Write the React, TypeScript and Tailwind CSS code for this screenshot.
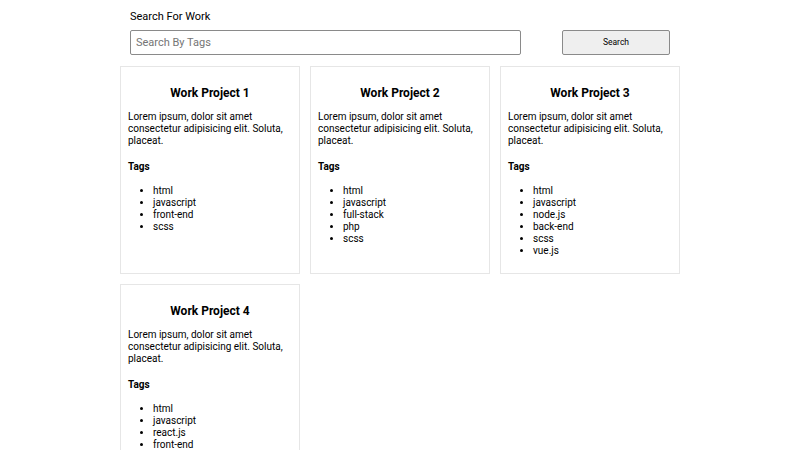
import React from "react";

type Project = {
    title: string;
    tags: string[];
};

const projects: Project[] = [
    { title: "Work Project 1", tags: ["html", "javascript", "front-end", "scss"] },
    { title: "Work Project 2", tags: ["html", "javascript", "full-stack", "php", "scss"] },
    { title: "Work Project 3", tags: ["html", "javascript", "node.js", "back-end", "scss", "vue.js"] },
    { title: "Work Project 4", tags: ["html", "javascript", "react.js", "front-end"] },
];

function ProjectCard({ project }: { project: Project }) {
    return (
        <div className="border border-[#e6e6e6] bg-white px-[7px] pt-[10px] pb-[16px]">
            <h3 className="text-center text-[12px] leading-[14px] font-bold mt-[9px]">{project.title}</h3>
            <p className="mt-[11px] text-[10px] leading-[12px]">
                Lorem ipsum, dolor sit amet consectetur adipisicing elit. Soluta, placeat.
            </p>
            <h4 className="mt-[13px] text-[10px] leading-[14px] font-bold">Tags</h4>
            <ul className="mt-[11px] list-disc pl-[25px] text-[10px] leading-[12px]">
                {project.tags.map((tag) => (
                    <li key={tag}>{tag}</li>
                ))}
            </ul>
        </div>
    );
}

export default function App() {
    return (
        <div className="min-h-[450px] bg-white text-black font-['Roboto',sans-serif]">
            <div className="w-[560px] mx-auto">
                {/* search bar */}
                <div className="px-[10px] pt-[10px] pb-[11px]">
                    <label className="block text-[11px] leading-[14px]">Search For Work</label>
                    <div className="mt-[6px] flex items-center justify-between">
                        <input
                            type="text"
                            placeholder="Search By Tags"
                            className="w-[391px] h-[25px] border border-[#8a8a8a] rounded-[2px] px-[5px] text-[11px] placeholder:text-[#757575] outline-none"
                        />
                        <button className="w-[108px] h-[25px] bg-[#efefef] border border-[#8a8a8a] rounded-[2px] text-[8.5px]">
                            Search
                        </button>
                    </div>
                </div>

                {/* project cards */}
                <div className="grid grid-cols-3 gap-[10px]">
                    {projects.map((p) => (
                        <ProjectCard key={p.title} project={p} />
                    ))}
                </div>
            </div>
        </div>
    );
}
